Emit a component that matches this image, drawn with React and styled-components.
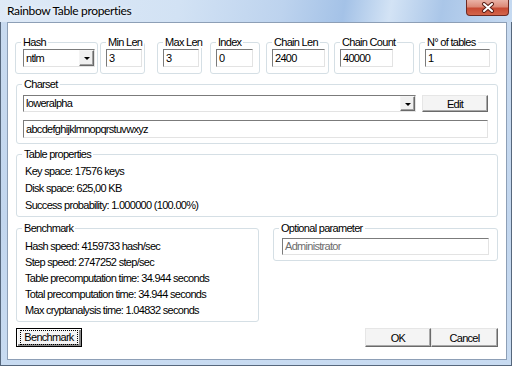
import styled, { createGlobalStyle } from 'styled-components';

const GlobalStyle = createGlobalStyle`
  html, body {
    margin: 0;
    padding: 0;
  }
  body {
    width: 512px;
    height: 366px;
    overflow: hidden;
    font-family: "Liberation Sans", Arial, sans-serif;
    font-size: 11px;
    letter-spacing: -0.7px;
    color: #000;
  }
`;

const Window = styled.div`
  width: 512px;
  height: 366px;
  box-sizing: border-box;
  display: flex;
  flex-direction: column;
  background: linear-gradient(180deg, #c9dbf0 0%, #c2d6ee 60%, #c8dbf1 100%);
  border: 1px solid #56677c;
  border-top: none;
`;

const TitleBar = styled.div`
  height: 22px;
  flex-shrink: 0;
  display: flex;
  align-items: flex-start;
  margin: 0 -1px;
  background: linear-gradient(100deg, #dfeaf7 0%, #d2e2f4 35%, #bdd3ee 55%, #a4c2e7 67%, #d3e3f5 76%, #aac6e8 86%, #c6daf1 100%);
`;

const Title = styled.span`
  font-family: Lato, "Liberation Sans", sans-serif;
  font-size: 12px;
  letter-spacing: -0.35px;
  line-height: 22px;
  padding-left: 7px;
  color: #000;
  text-shadow: 0 0 5px rgba(255, 255, 255, 0.95);
`;

const CloseButton = styled.div`
  margin-left: auto;
  margin-right: 3px;
  width: 43px;
  height: 16px;
  box-sizing: border-box;
  border: 1px solid #6e2a22;
  border-top: none;
  border-radius: 0 0 4px 4px;
  background: linear-gradient(180deg, #eab2a6 0%, #dc8a78 45%, #c74a33 55%, #d3654a 100%);
  display: flex;
  align-items: center;
  justify-content: center;
`;

const Client = styled.div`
  flex: 1;
  margin: 0 4px 5px 6px;
  box-sizing: border-box;
  border: 1px solid #8d9fb6;
  background: #fff;
  display: flex;
  flex-direction: column;
`;

const Row = styled.div`
  display: flex;
  align-items: flex-start;
  margin-top: ${(p) => p.$mt || 0}px;
  margin-left: ${(p) => p.$ml || 0}px;
  margin-right: ${(p) => p.$mr || 0}px;
`;

const Group = styled.fieldset`
  margin: 0 0 0 ${(p) => p.$ml || 0}px;
  padding: 0;
  min-width: 0;
  width: ${(p) => p.$w}px;
  box-sizing: border-box;
  border: 1px solid #d5dfe5;
  border-radius: 3px;
`;

const Legend = styled.legend`
  margin-left: 5px;
  padding: 0 2px;
  line-height: 12px;
  font-size: 11px;
  white-space: nowrap;
`;

const GroupBody = styled.div`
  padding: ${(p) => p.$pad};
`;

const Line = styled.div`
  line-height: ${(p) => p.$lh}px;
  white-space: nowrap;
`;

const Edit = styled.div`
  width: ${(p) => p.$w}px;
  height: ${(p) => p.$h || 18}px;
  box-sizing: border-box;
  border: 1px solid;
  border-color: #7b7b7b #e3e3e3 #e3e3e3 #7b7b7b;
  background: #fff;
  padding-left: 2px;
  line-height: ${(p) => (p.$h || 18) - 2}px;
  color: ${(p) => (p.$muted ? '#6d6d6d' : '#000')};
  white-space: nowrap;
  overflow: hidden;
`;

const Combo = styled.div`
  width: ${(p) => p.$w}px;
  height: ${(p) => p.$h}px;
  box-sizing: border-box;
  border: 1px solid;
  border-color: #7b7b7b #e3e3e3 #e3e3e3 #7b7b7b;
  background: #fff;
  display: flex;
  align-items: stretch;
`;

const ComboText = styled.span`
  flex: 1;
  padding-left: 2px;
  line-height: ${(p) => p.$h - 2}px;
`;

const DropButton = styled.div`
  width: 15px;
  box-sizing: border-box;
  border: 1px solid;
  border-color: #f4f4f4 #696969 #696969 #f4f4f4;
  box-shadow: inset -1px -1px #a0a0a0;
  background: #f0f0f0;
  display: flex;
  align-items: center;
  justify-content: center;
  &::after {
    content: '';
    border-left: 3px solid transparent;
    border-right: 3px solid transparent;
    border-top: 3px solid #000;
    margin-top: 1px;
  }
`;

const Button = styled.button`
  width: ${(p) => p.$w}px;
  height: ${(p) => p.$h || 19}px;
  margin-left: ${(p) => p.$ml || 0}px;
  padding: 0;
  box-sizing: border-box;
  font-family: inherit;
  font-size: 11px;
  letter-spacing: inherit;
  color: #000;
  background: #f4f4f4;
  border: 1px solid;
  border-color: #e6e6e6 #6a6a6a #6a6a6a #e6e6e6;
  box-shadow: inset -1px -1px #a9a9a9;
  display: flex;
  align-items: center;
  justify-content: center;
`;

const DefaultButton = styled(Button)`
  border-color: #000;
  box-shadow: inset 1px 1px #fff, inset -2px -2px #8a8a8a;
  & > span {
    outline: 1px dotted #000;
    outline-offset: 0;
    padding: 0 3px;
    line-height: 13px;
  }
`;

const Spacer = styled.div`
  flex: 1;
`;

const topGroups = [
  { label: 'Min Len', value: '3', w: 45, ml: 2, iw: 36 },
  { label: 'Max Len', value: '3', w: 45, ml: 12, iw: 36 },
  { label: 'Index', value: '0', w: 50, ml: 8, iw: 37 },
  { label: 'Chain Len', value: '2400', w: 63, ml: 6, iw: 53 },
  { label: 'Chain Count', value: '40000', w: 80, ml: 5, iw: 53 },
  { label: 'N° of tables', value: '1', w: 78, ml: 5, iw: 65 },
];

const benchmarkLines = [
  'Hash speed: 4159733 hash/sec',
  'Step speed: 2747252 step/sec',
  'Table precomputation time: 34.944 seconds',
  'Total precomputation time: 34.944 seconds',
  'Max cryptanalysis time: 1.04832 seconds',
];

const CloseIcon = () => (
  <svg width="14" height="11" viewBox="0 0 14 11">
    <path d="M3 2 L11 9 M11 2 L3 9" stroke="#5a1f17" strokeWidth="4" strokeLinecap="round" />
    <path d="M3 2 L11 9 M11 2 L3 9" stroke="#fff" strokeWidth="2" strokeLinecap="round" />
  </svg>
);

export default function App() {
  return (
    <>
      <GlobalStyle />
      <Window>
        <TitleBar>
          <Title>Rainbow Table properties</Title>
          <CloseButton>
            <CloseIcon />
          </CloseButton>
        </TitleBar>
        <Client>
          <Row $mt={13} $ml={7}>
            <Group $w={83}>
              <Legend>Hash</Legend>
              <GroupBody $pad="1px 0 6px 7px">
                <Combo $w={72} $h={18}>
                  <ComboText $h={18}>ntlm</ComboText>
                  <DropButton />
                </Combo>
              </GroupBody>
            </Group>
            {topGroups.map((g) => (
              <Group key={g.label} $w={g.w} $ml={g.ml}>
                <Legend>{g.label}</Legend>
                <GroupBody $pad="1px 0 6px 5px">
                  <Edit $w={g.iw}>{g.value}</Edit>
                </GroupBody>
              </Group>
            ))}
          </Row>

          <Row $mt={4} $ml={8}>
            <Group $w={482}>
              <Legend>Charset</Legend>
              <GroupBody $pad="5px 0 5px 6px">
                <Row>
                  <Combo $w={393} $h={17}>
                    <ComboText $h={17}>loweralpha</ComboText>
                    <DropButton />
                  </Combo>
                  <Button $w={66} $h={17} $ml={6}>Edit</Button>
                </Row>
                <Row $mt={8}>
                  <Edit $w={465}>abcdefghijklmnopqrstuvwxyz</Edit>
                </Row>
              </GroupBody>
            </Group>
          </Row>

          <Row $mt={4} $ml={8}>
            <Group $w={482}>
              <Legend>Table properties</Legend>
              <GroupBody $pad="3px 0 2px 8px">
                <Line $lh={17}>Key space: 17576 keys</Line>
                <Line $lh={17}>Disk space: 625,00 KB</Line>
                <Line $lh={17}>Success probability: 1.000000 (100.00%)</Line>
              </GroupBody>
            </Group>
          </Row>

          <Row $mt={5} $ml={8}>
            <Group $w={243}>
              <Legend>Benchmark</Legend>
              <GroupBody $pad="4px 0 3px 8px">
                {benchmarkLines.map((l) => (
                  <Line key={l} $lh={16}>{l}</Line>
                ))}
              </GroupBody>
            </Group>
            <Group $w={225} $ml={14}>
              <Legend>Optional parameter</Legend>
              <GroupBody $pad="4px 0 5px 8px">
                <Edit $w={207} $h={17} $muted>Administrator</Edit>
              </GroupBody>
            </Group>
          </Row>

          <Row $mt={6} $ml={8} $mr={8}>
            <DefaultButton $w={66}>
              <span>Benchmark</span>
            </DefaultButton>
            <Spacer />
            <Button $w={66}>OK</Button>
            <Button $w={67}>Cancel</Button>
          </Row>
        </Client>
      </Window>
    </>
  );
}
